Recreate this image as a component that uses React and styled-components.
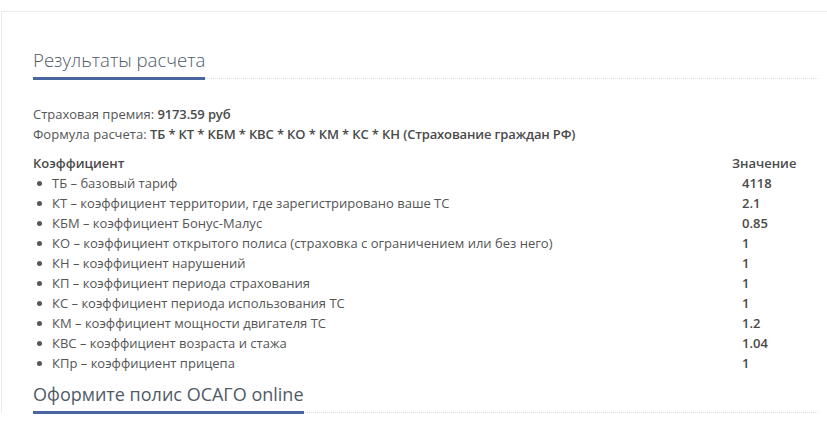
import React from "react";
import styled, { createGlobalStyle } from "styled-components";

const GlobalStyle = createGlobalStyle`
  body {
    margin: 0;
    background: #fff;
    font-family: "Open Sans", "Liberation Sans", sans-serif;
    color: #555;
  }
`;

const coefficients = [
  { code: "ТБ", text: "базовый тариф", value: "4118" },
  { code: "КТ", text: "коэффициент территории, где зарегистрировано ваше ТС", value: "2.1" },
  { code: "КБМ", text: "коэффициент Бонус-Малус", value: "0.85" },
  { code: "КО", text: "коэффициент открытого полиса (страховка с ограничением или без него)", value: "1" },
  { code: "КН", text: "коэффициент нарушений", value: "1" },
  { code: "КП", text: "коэффициент периода страхования", value: "1" },
  { code: "КС", text: "коэффициент периода использования ТС", value: "1" },
  { code: "КМ", text: "коэффициент мощности двигателя ТС", value: "1.2" },
  { code: "КВС", text: "коэффициент возраста и стажа", value: "1.04" },
  { code: "КПр", text: "коэффициент прицепа", value: "1" },
];

const App = () => {
  return (
    <Page>
      <GlobalStyle />
      <Card>
        <SectionHead>
          <Title $light>Результаты расчета</Title>
        </SectionHead>
        <Summary>
          <Line>
            Страховая премия: <b>9173.59 руб</b>
          </Line>
          <Line>
            Формула расчета: <b>ТБ * КТ * КБМ * КВС * КО * КМ * КС * КН (Страхование граждан РФ)</b>
          </Line>
        </Summary>
        <Table>
          <HeadCell>Коэффициент</HeadCell>
          <HeadCell>Значение</HeadCell>
          {coefficients.map((c) => (
            <React.Fragment key={c.code}>
              <Item>
                <Bullet />
                {c.code} – {c.text}
              </Item>
              <Value>{c.value}</Value>
            </React.Fragment>
          ))}
        </Table>
        <SectionHead $spaced>
          <Title>Оформите полис ОСАГО online</Title>
        </SectionHead>
      </Card>
    </Page>
  );
};

const Page = styled.div`
  padding: 11px 0 0 1px;
  height: 420px;
  overflow: hidden;
`;

const Card = styled.div`
  border-top: 1px solid #ebebeb;
  border-left: 1px solid #ebebeb;
  padding: 35px 9px 0 31px;
`;

const SectionHead = styled.div`
  display: flex;
  margin-top: ${(p) => (p.$spaced ? "8px" : "0")};
  border-bottom: 1px dotted #dcdcdc;
`;

const Title = styled.h2`
  margin: 0 0 -2px;
  padding-bottom: 4px;
  border-bottom: 3px solid #4a66a0;
  font-size: ${(p) => (p.$light ? "18.6px" : "18px")};
  font-weight: ${(p) => (p.$light ? 300 : 400)};
  line-height: 26px;
  color: #505a66;
`;

const Summary = styled.div`
  margin-top: 25px;
`;

const Line = styled.div`
  font-size: 13px;
  line-height: 20px;

  b {
    font-weight: 600;
    color: #4a4a4a;
    letter-spacing: -0.14px;
  }
`;

const Table = styled.div`
  display: grid;
  grid-template-columns: 1fr 86px;
  margin-top: 9px;
  margin-bottom: 1px;
  font-size: 13px;
  line-height: 20px;
`;

const HeadCell = styled.div`
  font-weight: 600;
  color: #4a4a4a;
`;

const Item = styled.div`
  display: flex;
  align-items: center;
  padding-left: 4px;
`;

const Bullet = styled.span`
  width: 5px;
  height: 5px;
  border-radius: 50%;
  background: #555;
  margin-right: 10px;
`;

const Value = styled.div`
  font-weight: 600;
  color: #4a4a4a;
  padding-left: 10px;
`;

export default App;
